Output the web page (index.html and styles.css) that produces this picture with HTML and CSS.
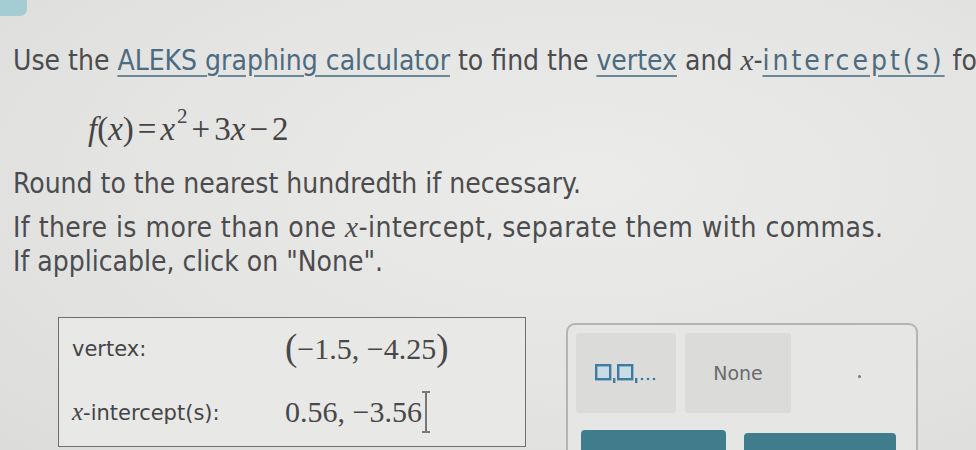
FILE: index.html
```html
<!DOCTYPE html>
<html>
<head>
<meta charset="utf-8">
<link rel="stylesheet" href="styles.css">
</head>
<body>
<div class="page">
  <div class="corner-btn"></div>
  <div class="content">
    <p class="line intro">Use the <span class="link">ALEKS graphing calculator</span> to find the <span class="link">vertex</span> and <span class="mi">x</span>-<span class="link wide">intercept(s)</span> for the given function.</p>
    <div class="formula"><span class="mi">f</span>(<span class="mi">x</span>)<span class="op">=</span><span class="mi">x</span><sup>2</sup><span class="op">+</span>3<span class="mi">x</span><span class="op">−</span>2</div>
    <p class="line round">Round to the nearest hundredth if necessary.</p>
    <p class="line sep">If there is more than one <span class="mi">x</span>-intercept, separate them with commas.</p>
    <p class="line appl">If applicable, click on "None".</p>
    <div class="answer-row">
      <div class="answer-box">
        <div class="arow">
          <span class="alabel">vertex:</span>
          <span class="aval"><span class="paren">(</span>−1.5, −4.25<span class="paren">)</span></span>
        </div>
        <div class="arow">
          <span class="alabel"><span class="mi lab">x</span>-intercept(s):</span>
          <span class="aval">0.56, −3.56<span class="cursor"></span></span>
        </div>
      </div>
      <div class="keypad">
        <div class="keys">
          <div class="key">
            <svg width="62" height="20" viewBox="0 0 62 20">
              <rect x="1.2" y="1.2" width="14" height="14" fill="#c9dbe4" stroke="#3f7aa0" stroke-width="2.4"/>
              <rect x="18" y="14" width="2.4" height="5" fill="#3f7aa0"/>
              <rect x="23.2" y="1.2" width="14" height="14" fill="#c9dbe4" stroke="#3f7aa0" stroke-width="2.4"/>
              <rect x="40" y="14" width="2.4" height="5" fill="#3f7aa0"/>
              <circle cx="47" cy="15" r="1.3" fill="#3f7aa0"/>
              <circle cx="53" cy="15" r="1.3" fill="#3f7aa0"/>
              <circle cx="59" cy="15" r="1.3" fill="#3f7aa0"/>
            </svg>
          </div>
          <div class="key none">None</div>
          <div class="key blank"><span class="dot"></span></div>
        </div>
        <div class="actions">
          <div class="act"></div>
          <div class="act second"></div>
        </div>
      </div>
    </div>
  </div>
</div>
</body>
</html>
```

FILE: styles.css
```css
html, body {
  margin: 0;
  padding: 0;
}
body {
  width: 976px;
  height: 450px;
  overflow: hidden;
  background: radial-gradient(ellipse at 60% 40%, #ebebe9 0%, #e4e4e2 55%, #dcdcda 100%);
  font-family: "DejaVu Sans Condensed", "DejaVu Sans", sans-serif;
  color: #4c4c4e;
}
.page {
  position: relative;
  width: 976px;
  height: 450px;
  overflow: hidden;
}
.corner-btn {
  position: absolute;
  left: 0;
  top: 0;
  width: 27px;
  height: 16px;
  background: #a3cdd2;
  border-bottom-right-radius: 7px;
}
.content {
  padding: 45px 0 0 13px;
  white-space: nowrap;
}
.line {
  margin: 0;
  font-size: 28px;
  line-height: 30px;
}
.link {
  color: #4c6b80;
  text-decoration: underline;
  text-decoration-color: #6b8898;
  text-underline-offset: 5px;
}
.link.wide {
  letter-spacing: 3px;
}
.mi {
  font-family: "Liberation Serif", serif;
  font-style: italic;
  font-size: 1.05em;
}
.formula {
  margin: 33px 0 0 75px;
  height: 40px;
  font-family: "Liberation Serif", serif;
  font-size: 33px;
  line-height: 40px;
  color: #444446;
}
.formula .mi {
  font-size: 1em;
}
.op {
  margin: 0 4px;
}
.formula sup {
  font-size: 21px;
  vertical-align: 17px;
  line-height: 0;
  margin-left: 2px;
}
.round {
  margin-top: 20px;
}
.sep {
  margin-top: 13px;
  letter-spacing: 0.45px;
}
.appl {
  margin-top: 4px;
}
.answer-row {
  display: flex;
  align-items: flex-start;
  margin: 40px 0 0 45px;
}
.answer-box {
  width: 468px;
  height: 130px;
  border: 1.5px solid #6e6e70;
  box-sizing: border-box;
  padding: 14px 0 0 13px;
  background: #e8e8e6;
}
.arow {
  display: flex;
  align-items: center;
  height: 34px;
}
.arow + .arow {
  margin-top: 29px;
}
.alabel {
  width: 213px;
  font-family: "DejaVu Sans", sans-serif;
  font-size: 21px;
  color: #444446;
}
.mi.lab {
  font-size: 25px;
  font-style: italic;
}
.aval {
  font-family: "Liberation Serif", serif;
  font-size: 30px;
  color: #48484a;
  display: flex;
  align-items: center;
}
.paren {
  font-size: 37px;
  line-height: 30px;
  margin-top: -3px;
}
.cursor {
  display: inline-block;
  width: 6px;
  height: 42px;
  margin-left: 3px;
  border-left: 2px solid #777;
  position: relative;
}
.cursor::before, .cursor::after {
  content: "";
  position: absolute;
  left: -5px;
  width: 8px;
  border-top: 2px solid #777;
}
.cursor::before { top: 0; }
.cursor::after { bottom: 0; }
.keypad {
  margin-left: 40px;
  margin-top: 6px;
  width: 352px;
  height: 140px;
  border: 2px solid #b4b4b4;
  border-radius: 9px;
  box-sizing: border-box;
  padding: 8px 8px 0 8px;
  background: #e6e6e4;
}
.keys {
  display: flex;
  gap: 9px;
}
.key {
  width: 100px;
  height: 80px;
  background: #dbdbda;
  border-radius: 3px;
  display: flex;
  align-items: center;
  justify-content: center;
}
.key svg {
  margin-top: 2px;
}
.key.none {
  width: 106px;
  font-family: "DejaVu Sans", sans-serif;
  font-size: 19px;
  color: #6a6a6c;
}
.key.blank {
  background: transparent;
  width: 100px;
}
.dot {
  width: 3px;
  height: 3px;
  background: #777;
  border-radius: 50%;
  margin: 6px 0 0 18px;
}
.actions {
  display: flex;
  gap: 18px;
  margin: 17px 0 0 5px;
}
.act {
  width: 145px;
  height: 30px;
  background: #3f7c8c;
  border-radius: 4px;
}
.act.second {
  width: 152px;
  margin-top: 3px;
}
```
